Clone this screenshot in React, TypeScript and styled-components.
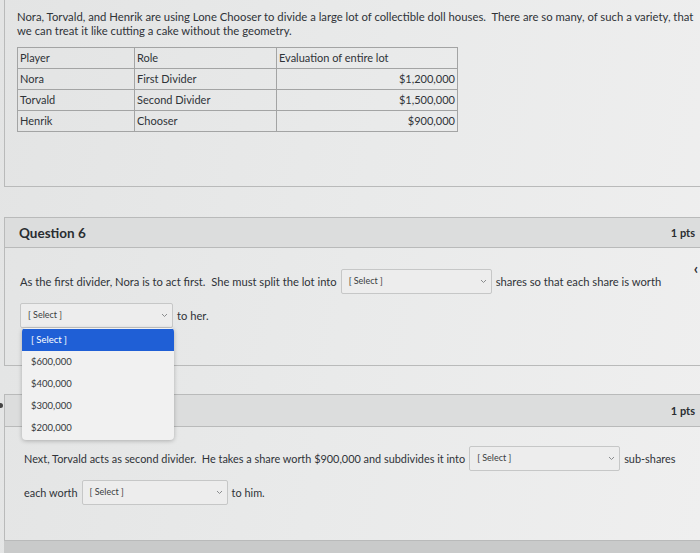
import React from "react";
import styled, { createGlobalStyle } from "styled-components";

const COLOR = {
  PAGE: "#e7e8e8",
  HEADER: "#dcdddd",
  LINE: "#b9baba",
  TEXT: "#2f3338",
  SELECT_BG: "#ededed",
  SELECT_BORDER: "#c6c7c7",
  BLUE: "#1f5fd6",
};

const GlobalStyle = createGlobalStyle`
  html, body {
    margin: 0;
    padding: 0;
    background: ${COLOR.PAGE};
  }
  body {
    font-family: Lato, "Open Sans", sans-serif;
    color: ${COLOR.TEXT};
  }
`;

interface Row {
  player: string;
  role: string;
  value: string;
}

const rows: Row[] = [
  { player: "Nora", role: "First Divider", value: "$1,200,000" },
  { player: "Torvald", role: "Second Divider", value: "$1,500,000" },
  { player: "Henrik", role: "Chooser", value: "$900,000" },
];

const options = ["$600,000", "$400,000", "$300,000", "$200,000"];

const Chevron = () => (
  <svg width="7" height="5" viewBox="0 0 7 5">
    <path d="M1 1 L3.5 3.5 L6 1" fill="none" stroke="#8a8c8e" strokeWidth="1" />
  </svg>
);

const Select = ({ width }: { width: number }) => (
  <SelectBox style={{ width }}>
    <span>[ Select ]</span>
    <Chevron />
  </SelectBox>
);

const App = () => {
  return (
    <>
      <GlobalStyle />
      <Page>
        <Body $height={187} $noTop>
          <Intro>
            Nora, Torvald, and Henrik are using Lone Chooser to divide a large lot of collectible doll houses.&nbsp; There are so many, of
            such a variety, that we can treat it like cutting a cake without the geometry.
          </Intro>
          <Table>
            <colgroup>
              <col style={{ width: 117 }} />
              <col style={{ width: 142 }} />
              <col style={{ width: 181 }} />
            </colgroup>
            <tbody>
              <tr>
                <Cell>Player</Cell>
                <Cell>Role</Cell>
                <Cell>Evaluation of entire lot</Cell>
              </tr>
              {rows.map((r) => (
                <tr key={r.player}>
                  <Cell>{r.player}</Cell>
                  <Cell>{r.role}</Cell>
                  <Cell $right>{r.value}</Cell>
                </tr>
              ))}
            </tbody>
          </Table>
        </Body>

        <Gap $h={30} />

        <Header>
          <Title>Question 6</Title>
          <Points>1 pts</Points>
        </Header>
        <Body $height={119}>
          <QuestionText $top={11} $left={3} $size={11.2}>
            <Line>
              <span>As the first divider, Nora is to act first.&nbsp; She must split the lot into</span>
              <Select width={151} />
              <span>shares so that each share is worth</span>
            </Line>
            <Line>
              <Select width={153} />
              <span>to her.</span>
            </Line>
          </QuestionText>
        </Body>

        <Gap $h={28} />

        <Header $tall>
          <span />
          <Points>1 pts</Points>
        </Header>
        <Body $height={115}>
          <QuestionText $top={9} $left={7} $size={10.9}>
            <Line>
              <span>Next, Torvald acts as second divider.&nbsp; He takes a share worth $900,000 and subdivides it into</span>
              <Select width={151} />
              <span>sub-shares</span>
            </Line>
            <Line>
              <span>each worth</span>
              <Select width={146} />
              <span>to him.</span>
            </Line>
          </QuestionText>
        </Body>
        <Footer />

        <Dropdown>
          <Option $active>[ Select ]</Option>
          {options.map((o) => (
            <Option key={o}>{o}</Option>
          ))}
        </Dropdown>
        <EdgeIcon>‹</EdgeIcon>
        <EdgeDot />
      </Page>
    </>
  );
};

const Page = styled.div`
  position: relative;
  width: 700px;
  height: 553px;
  overflow: hidden;
  padding-left: 4px;
  box-sizing: border-box;
  background: linear-gradient(100deg, #e3e4e4 0%, #e9eaea 50%, #efefef 100%);
`;

const Body = styled.div<{ $height: number; $noTop?: boolean }>`
  box-sizing: border-box;
  height: ${(p) => p.$height}px;
  width: 720px;
  border: 1px solid ${COLOR.LINE};
  border-top: ${(p) => (p.$noTop ? "none" : `1px solid ${COLOR.LINE}`)};
  border-right: none;
  padding: 10px 0 0 12px;
`;

const Intro = styled.p`
  margin: 0;
  width: 680px;
  font-size: 11.3px;
  line-height: 13.5px;
`;

const Table = styled.table`
  margin-top: 10px;
  border-collapse: collapse;
  table-layout: fixed;
  width: 440px;
  border: 1px solid #8f9090;
  font-size: 11px;
`;

const Cell = styled.td<{ $right?: boolean }>`
  border: 1px solid #a3a4a4;
  height: 20px;
  padding: 0 2px;
  text-align: ${(p) => (p.$right ? "right" : "left")};
  vertical-align: top;
  line-height: 19px;
  white-space: nowrap;
`;

const Gap = styled.div<{ $h: number }>`
  height: ${(p) => p.$h}px;
`;

const Header = styled.div<{ $tall?: boolean }>`
  box-sizing: border-box;
  height: ${(p) => (p.$tall ? 32 : 30)}px;
  width: 696px;
  display: flex;
  align-items: center;
  justify-content: space-between;
  padding: 0 5px 0 14px;
  background: ${COLOR.HEADER};
  border-top: 1px solid ${COLOR.LINE};
  border-left: 1px solid ${COLOR.LINE};
`;

const Title = styled.span`
  font-size: 13.5px;
  font-weight: 700;
  color: #2a2d31;
`;

const Points = styled.span`
  font-size: 11px;
  font-weight: 700;
  color: #2a2d31;
`;

const QuestionText = styled.div<{ $top: number; $left: number; $size: number }>`
  display: flex;
  flex-direction: column;
  gap: 9px;
  margin-top: ${(p) => p.$top}px;
  margin-left: ${(p) => p.$left}px;
  font-size: ${(p) => p.$size}px;
`;

const Line = styled.div`
  display: flex;
  align-items: center;
  gap: 4px;
  white-space: nowrap;
`;

const SelectBox = styled.div`
  box-sizing: border-box;
  height: 25px;
  display: flex;
  align-items: flex-start;
  justify-content: space-between;
  padding: 5px 4px 0 7px;
  background: ${COLOR.SELECT_BG};
  border: 1px solid ${COLOR.SELECT_BORDER};
  border-radius: 2px;
  font-size: 9px;
  color: #3a3d40;

  & > svg {
    margin-top: 4px;
  }
`;

const Footer = styled.div`
  height: 12px;
  background: #c9caca;
`;

const Dropdown = styled.div`
  position: absolute;
  left: 22px;
  top: 328px;
  width: 152px;
  height: 112px;
  background: #f1f1f1;
  border-radius: 4px;
  box-shadow: 0 1px 4px rgba(0, 0, 0, 0.25);
  overflow: hidden;
  padding-top: 1px;
  box-sizing: border-box;
`;

const Option = styled.div<{ $active?: boolean }>`
  height: 22px;
  line-height: 22px;
  padding-left: 9px;
  font-size: 9.5px;
  color: ${(p) => (p.$active ? "#ffffff" : "#35383b")};
  background: ${(p) => (p.$active ? COLOR.BLUE : "transparent")};
`;

const EdgeIcon = styled.span`
  position: absolute;
  right: 2px;
  top: 259px;
  font-size: 15px;
  font-weight: 700;
  color: #2a2d31;
`;

const EdgeDot = styled.span`
  position: absolute;
  left: 0;
  top: 403px;
  width: 3px;
  height: 5px;
  border-radius: 0 3px 3px 0;
  background: #444;
`;

export default App;
